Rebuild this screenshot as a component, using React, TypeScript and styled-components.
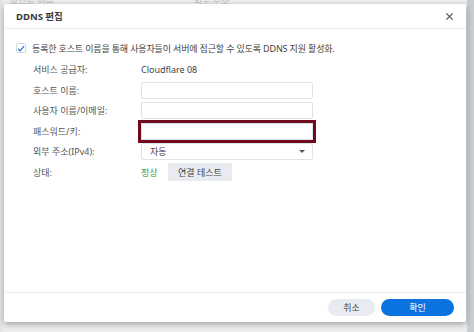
import { FC } from "react";
import styled, { createGlobalStyle } from "styled-components";

const GlobalStyle = createGlobalStyle`
	html, body {
		margin: 0;
		padding: 0;
		background: #e6e7e9;
	}
	body {
		font-family: "Noto Sans", "Noto Sans CJK KR", sans-serif;
		color: #333;
	}
`;

const App: FC = () => {
	return (
		<>
			<GlobalStyle />
			<Page>
				<Behind>
					<span>호스트 이름</span>
					<span>외부 주소</span>
				</Behind>
				<Dialog>
					<Header>
						<Title>DDNS 편집</Title>
						<Close aria-label="close">
							<svg width="9" height="9" viewBox="0 0 10 10">
								<path d="M1.5 1.5 L8.5 8.5 M8.5 1.5 L1.5 8.5" stroke="#555" strokeWidth="1.4" />
							</svg>
						</Close>
					</Header>
					<Body>
						<CheckRow>
							<CheckBox>
								<svg width="11" height="11" viewBox="0 0 12 12">
									<path d="M1.5 6.5 L4.6 9.5 L10.5 2.5" fill="none" stroke="#1a73d9" strokeWidth="1.8" />
								</svg>
							</CheckBox>
							<CheckText>등록한 호스트 이름을 통해 사용자들이 서버에 접근할 수 있도록 DDNS 지원 활성화.</CheckText>
						</CheckRow>
						<Form>
							<Row>
								<Label>서비스 공급자:</Label>
								<Value>Cloudflare 08</Value>
							</Row>
							<Row>
								<Label>호스트 이름:</Label>
								<Input />
							</Row>
							<Row>
								<Label>사용자 이름/이메일:</Label>
								<Input />
							</Row>
							<Row>
								<Label>패스워드/키:</Label>
								<Input $highlight />
							</Row>
							<Row>
								<Label>외부 주소(IPv4):</Label>
								<Select>
									<span>자동</span>
									<Caret />
								</Select>
							</Row>
							<Row>
								<Label>상태:</Label>
								<Status>정상</Status>
								<TestButton type="button">연결 테스트</TestButton>
							</Row>
						</Form>
					</Body>
					<Footer>
						<Button type="button">취소</Button>
						<Button type="button" $primary>
							확인
						</Button>
					</Footer>
				</Dialog>
			</Page>
		</>
	);
};

export default App;

const Page = styled.div`
	width: 474px;
	height: 332px;
	box-sizing: border-box;
	padding: 4px 8px 10px 4px;
	display: flex;
	flex-direction: column;
	position: relative;
	overflow: hidden;
	background: linear-gradient(to right, #e2e3e4 0, #eeeeee 4px, #eeeeee 466px, #c9ccd0 468px);
`;

const Behind = styled.div`
	position: absolute;
	top: -6px;
	left: 10px;
	display: flex;
	gap: 140px;
	font-size: 9px;
	color: #bbb;
`;

const Dialog = styled.div`
	position: relative;
	flex: 1;
	display: flex;
	flex-direction: column;
	background: #fff;
	border-radius: 2px;
	box-shadow: 0 2px 6px rgba(0, 0, 0, 0.35);
`;

const Header = styled.div`
	height: 24px;
	display: flex;
	align-items: center;
	justify-content: space-between;
	padding: 0 10px 0 12px;
	border-bottom: 1px solid #eceef0;
`;

const Title = styled.h1`
	margin: 0;
	font-size: 9.5px;
	font-weight: 700;
	color: #3a3a3a;
`;

const Close = styled.button`
	display: flex;
	align-items: center;
	justify-content: center;
	width: 14px;
	height: 14px;
	padding: 0;
	border: none;
	background: none;
`;

const Body = styled.div`
	flex: 1;
	padding: 12px 12px 0 12px;
`;

const CheckRow = styled.div`
	display: flex;
	align-items: center;
	gap: 6px;
	height: 14px;
`;

const CheckBox = styled.span`
	width: 10px;
	height: 10px;
	box-sizing: border-box;
	display: flex;
	align-items: center;
	justify-content: center;
	border: 1px solid #d3d7dc;
	border-radius: 2px;
	background: #fff;
`;

const CheckText = styled.span`
	font-size: 9px;
	letter-spacing: -0.15px;
	color: #444;
	white-space: nowrap;
`;

const Form = styled.div`
	display: flex;
	flex-direction: column;
	gap: 3.5px;
	padding: 6px 0 0 17px;
`;

const Row = styled.div`
	display: flex;
	align-items: center;
	height: 17px;
`;

const Label = styled.span`
	width: 108px;
	flex-shrink: 0;
	font-size: 9px;
	color: #555;
`;

const Value = styled.span`
	font-size: 9px;
	color: #444;
`;

const Input = styled.div<{ $highlight?: boolean }>`
	width: 172px;
	height: 17px;
	box-sizing: border-box;
	border: 1px solid #dfe2e6;
	border-radius: ${({ $highlight }) => ($highlight ? "0" : "2px")};
	background: #fff;
	outline: ${({ $highlight }) => ($highlight ? "3px solid #6e0c1d" : "none")};
	outline-offset: 0;
`;

const Select = styled(Input)`
	display: flex;
	align-items: center;
	justify-content: space-between;
	padding: 0 7px 0 8px;
	font-size: 9px;
	color: #444;
`;

const Caret = styled.span`
	width: 0;
	height: 0;
	border-left: 3px solid transparent;
	border-right: 3px solid transparent;
	border-top: 3px solid #555;
`;

const Status = styled.span`
	font-size: 9px;
	color: #3c9a3c;
	width: 27px;
`;

const TestButton = styled.button`
	height: 18px;
	padding: 0 10px;
	border: none;
	border-radius: 2px;
	background: #e8ecf0;
	font-family: inherit;
	font-size: 9px;
	color: #444;
`;

const Footer = styled.div`
	height: 29px;
	display: flex;
	align-items: center;
	justify-content: flex-end;
	gap: 6px;
	padding: 0 12px;
	border-top: 1px solid #eceef0;
`;

const Button = styled.button<{ $primary?: boolean }>`
	height: 17px;
	width: ${({ $primary }) => ($primary ? "73px" : "47px")};
	border: none;
	border-radius: 9px;
	font-family: inherit;
	font-size: 9px;
	color: ${({ $primary }) => ($primary ? "#fff" : "#444")};
	background: ${({ $primary }) => ($primary ? "#0b73e0" : "#e8ecf1")};
`;
